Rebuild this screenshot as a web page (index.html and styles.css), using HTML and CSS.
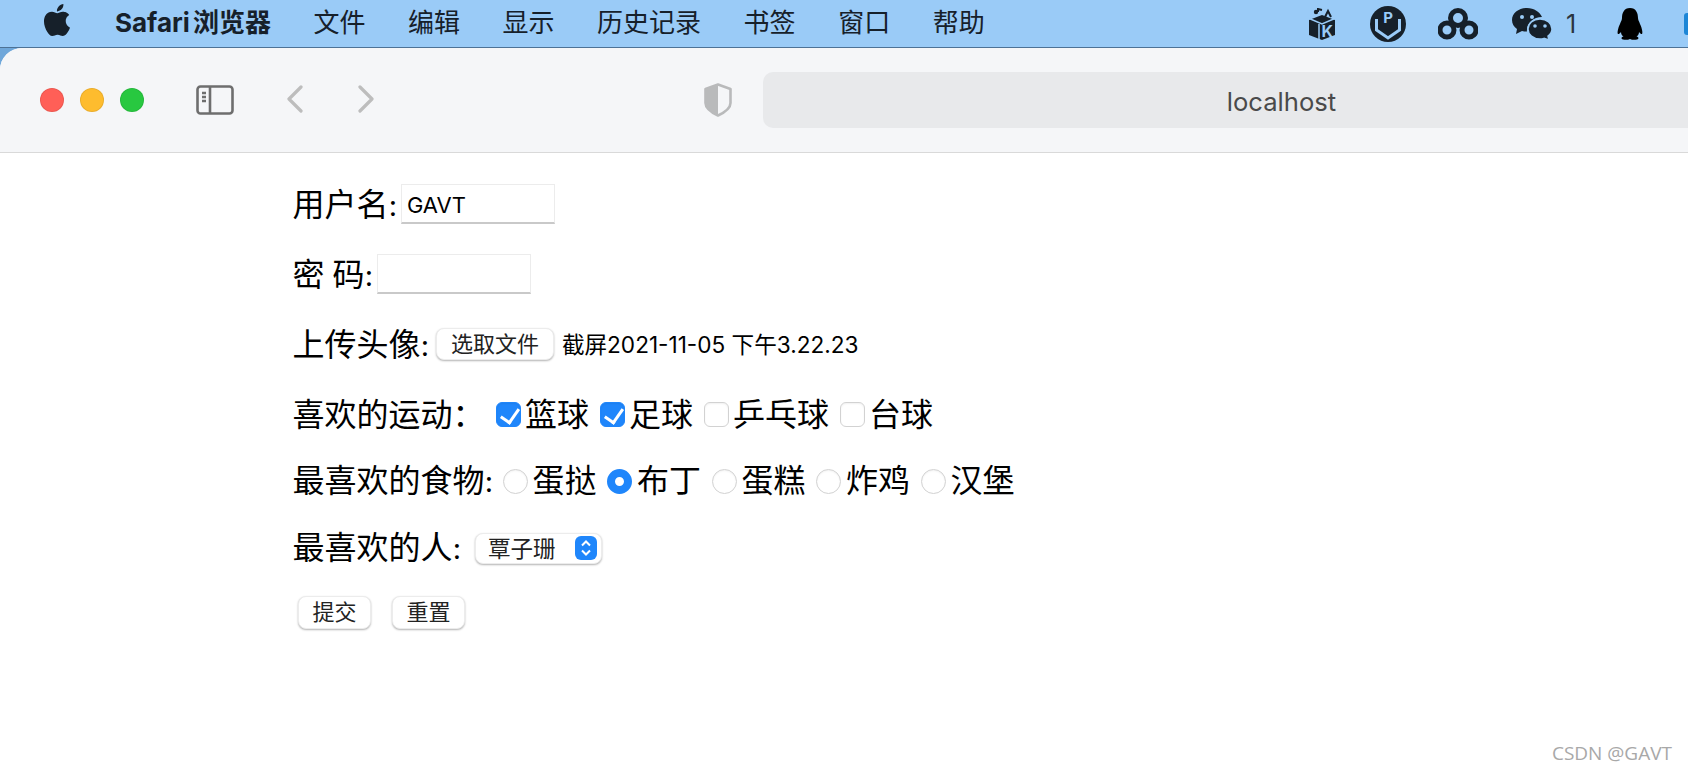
FILE: index.html
```html
<!DOCTYPE html>
<html lang="zh">
<head>
<meta charset="utf-8">
<title>localhost</title>
<link rel="stylesheet" href="styles.css">
</head>
<body>
<header class="menubar">
  <svg class="apple" viewBox="0 0 24 24"><path d="M12.152 6.896c-.948 0-2.415-1.078-3.96-1.04-2.04.027-3.91 1.183-4.961 3.014-2.117 3.675-.546 9.103 1.519 12.09 1.013 1.454 2.208 3.09 3.792 3.039 1.52-.065 2.09-.987 3.935-.987 1.831 0 2.35.987 3.96.948 1.637-.026 2.676-1.48 3.676-2.948 1.156-1.688 1.636-3.325 1.662-3.415-.039-.013-3.182-1.221-3.22-4.857-.026-3.04 2.48-4.494 2.597-4.559-1.429-2.09-3.623-2.324-4.39-2.376-2-.156-3.675 1.09-4.61 1.09zM15.53 3.83c.843-1.012 1.4-2.427 1.245-3.83-1.207.052-2.662.805-3.532 1.818-.78.896-1.454 2.338-1.273 3.714 1.338.104 2.715-.688 3.559-1.701"/></svg>
  <nav class="menu">
    <span class="menu-app">Safari 浏览器</span>
    <span>文件</span><span>编辑</span><span>显示</span><span>历史记录</span><span>书签</span><span>窗口</span><span>帮助</span>
  </nav>
  <div class="tray">
    <svg class="tray-box" viewBox="0 0 30 32">
      <path d="M2 12 15 7l13 5v15l-13 5-13-5z"/>
      <path class="cut" d="M1 10l14 6 14-6M12 16v16" />
      <circle cx="9" cy="4" r="2.2"/><path class="note" d="M11 4V1l4 1M18 9l3-6 3 6"/>
      <text x="14.500" y="29" class="tray-k">K</text>
    </svg>
    <svg class="tray-p" viewBox="0 0 36 36">
      <circle cx="18" cy="18" r="18"/>
      <path class="p-shield" d="M6.500 13v11L18 32l11.500-8V13"/>
      <text x="18" y="17" class="tray-ptext">P</text>
    </svg>
    <svg class="tray-cloud" viewBox="0 0 40 32">
      <circle cx="20" cy="10" r="7.5"/><circle cx="9" cy="22" r="7"/><circle cx="31" cy="22" r="7"/>
    </svg>
    <svg class="tray-wechat" viewBox="0 0 40 32">
      <path d="M15 0C7 0 0 5 0 12c0 4 2 7 5 9l-1 5 6-3c2 .5 3 .6 5 .6 C14 16 21 9 30 9 28 4 22 0 15 0z"/>
      <path d="M28 11c-7 0-12 4.500-12 10s5 10 12 10c1.500 0 3-.3 4-.6l5 1.600-1-4c3-2 4-4.500 4-7 0-5.500-5-10-12-10z"/>
      <circle class="dot" cx="10" cy="9" r="2"/><circle class="dot" cx="20" cy="9" r="2"/>
      <circle class="dot" cx="23" cy="18" r="1.800"/><circle class="dot" cx="33" cy="18" r="1.800"/>
    </svg>
    <span class="tray-count">1</span>
    <svg class="tray-qq" viewBox="0 0 26 32"><path class="qq" d="M13 0C7 0 5 5 5 10c0 2-1 3-2 6-2 4-3 9-2 10 1 .5 2-1 3-2 0 2 1 3.500 2.500 4.500C4 29 4 31 6 31.500c2 .5 5 .5 7-.5 2 1 5 1 7 .5 2-.5 2-2.500-.5-3 1.500-1 2.500-2.500 2.500-4.500 1 1 2 2.500 3 2 1-1 0-6-2-10-1-3-2-4-2-6 0-5-2-10-8-10z"/></svg>
    <span class="tray-blue"></span>
  </div>
</header>

<div class="desktop">
  <section class="window">
    <div class="toolbar">
      <div class="lights">
        <span class="light red"></span><span class="light amber"></span><span class="light green"></span>
      </div>
      <svg class="sidebar-icon" viewBox="0 0 38 30">
        <rect x="1.500" y="1.500" width="35" height="27" rx="3"/>
        <path d="M14 1.500v27M6 8h4M6 12h4M6 16h4"/>
      </svg>
      <svg class="chev chev-back" viewBox="0 0 17 28"><path d="M15 2 3 14l12 12"/></svg>
      <svg class="chev chev-fwd" viewBox="0 0 17 28"><path d="M2 2l12 12L2 26"/></svg>
      <svg class="shield" viewBox="0 0 28 34">
        <path class="shield-out" d="M14 1.500 26.500 6v14c0 5-5 9-12.500 12.500C6.500 29 1.500 25 1.500 20V6z"/>
        <path class="shield-half" d="M14 1.500V32.500C6.500 29 1.500 25 1.500 20V6z"/>
      </svg>
      <div class="address">localhost</div>
    </div>
    <main class="page">
      <form class="form">
        <div class="row row-wide">
          <label class="lbl-a" for="user">用户名:</label>
          <input id="user" class="field" type="text" value="GAVT">
        </div>
        <div class="row row-wide">
          <label class="lbl-a" for="pwd">密 码:</label>
          <input id="pwd" class="field" type="password">
        </div>
        <div class="row row-wide">
          <label class="lbl-b">上传头像:</label>
          <button type="button" class="btn btn-file">选取文件</button>
          <span class="filename">截屏2021-11-05 下午3.22.23</span>
        </div>
        <div class="row row-sport">
          <span class="lbl-sport">喜欢的运动：</span>
          <label class="opt"><input class="check" type="checkbox" checked>篮球</label>
          <label class="opt"><input class="check" type="checkbox" checked>足球</label>
          <label class="opt"><input class="check" type="checkbox">乒乓球</label>
          <label class="opt"><input class="check" type="checkbox">台球</label>
        </div>
        <div class="row">
          <span class="lbl-food">最喜欢的食物:</span>
          <label class="opt"><input class="radio" type="radio" name="food">蛋挞</label>
          <label class="opt"><input class="radio" type="radio" name="food" checked>布丁</label>
          <label class="opt"><input class="radio" type="radio" name="food">蛋糕</label>
          <label class="opt"><input class="radio" type="radio" name="food">炸鸡</label>
          <label class="opt"><input class="radio" type="radio" name="food">汉堡</label>
        </div>
        <div class="row">
          <label class="lbl-person" for="person">最喜欢的人:</label>
          <div class="select-wrap">
            <select id="person" class="select"><option>覃子珊</option></select>
            <span class="select-arrow">
              <svg viewBox="0 0 22 24"><path d="M7 9.500l4-4 4 4M7 14.500l4 4 4-4"/></svg>
            </span>
          </div>
        </div>
        <div class="row row-actions">
          <button type="submit" class="btn btn-act">提交</button>
          <button type="reset" class="btn btn-act">重置</button>
        </div>
      </form>
    </main>
  </section>
</div>
<div class="watermark">CSDN @GAVT</div>
</body>
</html>
```
FILE: styles.css
```css
* { box-sizing: border-box; }
html, body { margin: 0; height: 100%; }
body {
  width: 1688px; height: 772px; overflow: hidden; position: relative;
  background: #fff; color: #000;
  font-family: "Liberation Serif", "Noto Sans CJK SC", serif;
}

/* menu bar */
.menubar {
  height: 48px; display: flex; align-items: center;
  background: #9acbf7; border-bottom: 1px solid #4d7296;
  color: #16202a; font: 26px/44px "Inter", "Noto Sans CJK SC", sans-serif;
  padding-left: 41px;
}
.apple { width: 32px; height: 32px; fill: #16202a; margin-right: 42px; margin-top: -7px; flex: none; }
.menu { display: flex; gap: 42.5px; white-space: nowrap; margin-top: -2px; }
.menu-app { font-weight: 700; word-spacing: -3px; }
.tray { margin-left: auto; display: flex; align-items: center; height: 46px; }
.tray svg { display: block; fill: #16202a; }
.tray-box { width: 30px; height: 32px; margin-right: 33px; }
.tray-box .cut { fill: none; stroke: #9acbf7; stroke-width: 1.5; }
.tray-box .note { fill: none; stroke: #16202a; stroke-width: 2; }
.tray-k { font: 700 16px "Inter", sans-serif; fill: #9acbf7; }
.tray-p { width: 36px; height: 36px; margin-right: 32px; }
.p-shield { fill: none; stroke: #9acbf7; stroke-width: 3; }
.tray-ptext { font: 700 15px "Inter", sans-serif; text-anchor: middle; fill: #9acbf7; }
.tray-cloud { width: 40px; height: 32px; margin-right: 34px; fill: none !important; stroke: #16202a; stroke-width: 5; }
.tray-wechat { width: 40px; height: 32px; margin-right: 14px; }
.tray-wechat path:nth-child(2) { stroke: #9acbf7; stroke-width: 1.5; }
.tray-wechat .dot { fill: #9acbf7; }
.tray-count { width: 51px; font-size: 25px; color: #2a3540; }
.tray-qq { width: 26px; height: 32px; margin-right: 41px; }
.tray-qq .qq { fill: #000; }
.tray-blue { width: 4px; height: 22px; border-radius: 3px 0 0 3px; background: #1d86d6; }

/* window */
.desktop { background: #6fa7da; height: 724px; }
.window { height: 724px; background: #fff; border-top-left-radius: 22px; overflow: hidden; }
.toolbar {
  height: 105px; display: flex; align-items: center;
  background: #f5f6f8; border-bottom: 1px solid #d9d9d9;
  padding-left: 40px; overflow: hidden;
}
.lights { display: flex; gap: 16px; margin-right: 52px; }
.light { width: 24px; height: 24px; border-radius: 50%; border: 1px solid rgba(0,0,0,.08); }
.red { background: #ff5f57; }
.amber { background: #febc2e; }
.green { background: #28c840; }
.sidebar-icon { width: 38px; height: 30px; margin-right: 52px; fill: none; stroke: #6e6e6e; stroke-width: 2.6; flex: none; }
.chev { width: 17px; height: 28px; margin-top: -2px; fill: none; stroke: #bdbdbd; stroke-width: 3.2; stroke-linecap: round; stroke-linejoin: round; flex: none; }
.chev-back { margin-right: 55px; }
.chev-fwd { margin-right: 329px; }
.shield { width: 28px; height: 34px; margin-right: 31px; flex: none; }
.shield-out { fill: none; stroke: #b9babb; stroke-width: 2.6; stroke-linejoin: round; }
.shield-half { fill: #b9babb; }
.address {
  flex: none; width: 1037px; height: 56px; border-radius: 10px; padding-top: 2px;
  background: #e8e9eb; color: #4a4a4a;
  font: 25.600px/56px "Inter", sans-serif; text-align: center;
}

/* form */
.page { padding: 31px 0 0 292.500px; }
.form { display: flex; flex-direction: column; gap: 27px; }
.row { height: 40px; display: flex; align-items: center; font-size: 32px; line-height: 40px; white-space: nowrap; }
.row-wide { margin-bottom: 3px; }
.row-wide label { padding-top: 2px; }
.row-sport { padding-top: 1px; }
.row-actions { margin-top: -3px; padding-left: 5.500px; gap: 21px; }
.lbl-a { margin-right: 3.500px; }
.lbl-b { margin-right: 6.500px; }
.lbl-sport { margin-right: 11.500px; }
.lbl-food { margin-right: 9.500px; }
.lbl-person { margin-right: 13.500px; }
.field {
  width: 154px; height: 40px; padding: 2px 5px 0; border: 1px solid #ececec; border-bottom: 2px solid #c9c9c9;
  background: #fff; border-radius: 0; outline: none;
  font: 22px "Inter", sans-serif; color: #000;
}
.btn {
  background: #fff; border: 1px solid #ececec; border-radius: 8px;
  box-shadow: 0 1px 2px rgba(0,0,0,.3); color: #222;
  font: 22px/1 "Inter", "Noto Sans CJK SC", sans-serif; padding: 0;
}
.btn-file { width: 118px; height: 32px; margin-right: 8px; }
.btn-act { width: 73px; height: 33px; }
.filename { font: 22.600px/32px "Inter", "Noto Sans CJK SC", sans-serif; color: #000; padding-top: 2px; }
.opt { display: flex; align-items: center; margin-right: 11px; }
.check, .radio {
  appearance: none; margin: 0 4px 0 0; flex: none; position: relative;
  background: #fff; border: 1px solid #d2d2d2; box-shadow: inset 0 1px 2px rgba(0,0,0,.06);
}
.check { width: 25px; height: 25px; border-radius: 6px; }
.check:checked { background: #1f86fb; border-color: #1f86fb; }
.check:checked::after {
  content: ""; position: absolute; left: 7px; top: 2px; width: 9px; height: 15px;
  border: solid #fff; border-width: 0 3px 3px 0; transform: rotate(35deg);
}
.radio { width: 25px; height: 25px; border-radius: 50%; margin-right: 4.500px; }
.radio:checked { background: #fff; border: 8px solid #1f86fb; box-shadow: none; }

.select-wrap { position: relative; }
.select {
  display: block; appearance: none; width: 127px; height: 31px; padding: 0 0 0 12px;
  background: #fff; border: 1px solid #ececec; border-radius: 8px;
  box-shadow: 0 1px 2px rgba(0,0,0,.3); color: #222;
  font: 22.500px "Inter", "Noto Sans CJK SC", sans-serif;
}
.select-arrow {
  position: absolute; right: 5px; top: 3px; width: 22px; height: 24px;
  border-radius: 6px; background: #1f86fb; pointer-events: none;
}
.select-arrow svg { display: block; width: 22px; height: 24px; fill: none; stroke: #fff; stroke-width: 2; }

.watermark {
  position: absolute; right: 16px; bottom: 6px;
  font: 19px "Open Sans", sans-serif; color: #a8a8a8;
}
```
